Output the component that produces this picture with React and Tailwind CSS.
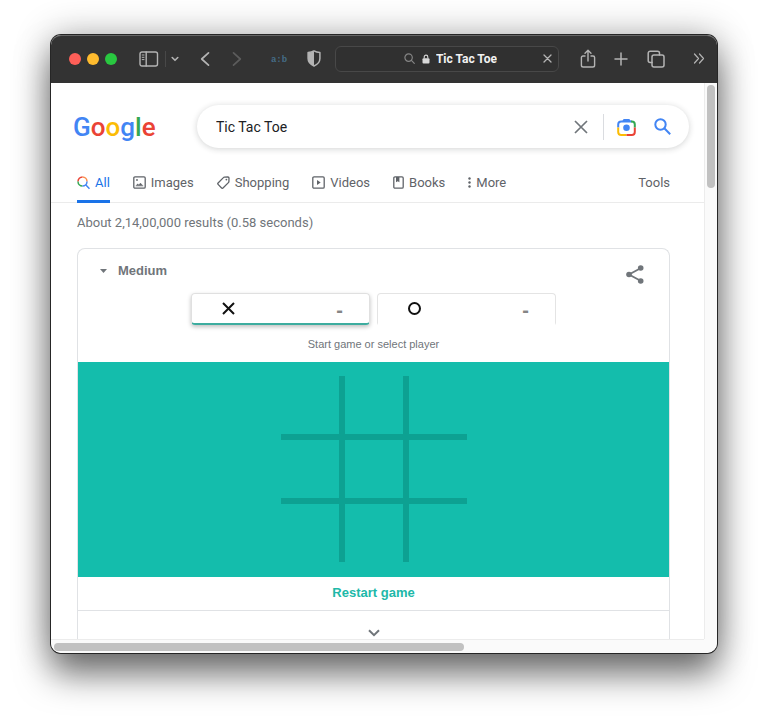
import { useState } from "react";

const stroke = {
  fill: "none",
  stroke: "currentColor",
  strokeLinecap: "round",
  strokeLinejoin: "round",
};

function BarButton({ label, className, children }) {
  return (
    <button type="button" aria-label={label} className={`flex h-6 shrink-0 items-center justify-center ${className}`}>
      {children}
    </button>
  );
}

function TitleBar() {
  return (
    <header className="flex h-12 items-center rounded-t-[10px] border-t border-[#656565] bg-[#333333] pb-[2px] pl-[18px] pr-[9px] text-[#b4b4b4]">
      <div className="flex shrink-0 gap-[6px]">
        <button type="button" aria-label="Close window" className="size-3 rounded-full bg-[#fe5f58]" />
        <button type="button" aria-label="Minimise window" className="size-3 rounded-full bg-[#febb2e]" />
        <button type="button" aria-label="Zoom window" className="size-3 rounded-full bg-[#29c840]" />
      </div>
      <BarButton label="Sidebar" className="ml-[22px] w-5">
        <svg width="20" height="16" viewBox="0 0 20 16" {...stroke} strokeWidth="1.4">
          <rect x="1" y="1" width="17.5" height="14" rx="2" />
          <path d="M7.2 1v14" />
          <path d="M3.2 4h1.8M3.2 6.3h1.8M3.2 8.6h1.8" strokeWidth="1" />
        </svg>
      </BarButton>
      <span className="ml-[6px] h-4 w-px shrink-0 bg-[#484848]" />
      <BarButton label="Tab groups" className="ml-1 w-[10px]">
        <svg width="8" height="6" viewBox="0 0 8 6" {...stroke} strokeWidth="1.6">
          <path d="M1.2 1.5 4 4.3l2.8-2.8" />
        </svg>
      </BarButton>
      <BarButton label="Back" className="ml-[19px] w-3">
        <svg width="10" height="16" viewBox="0 0 10 16" {...stroke} strokeWidth="1.7">
          <path d="M8.5 1.8 1.7 8l6.8 6.2" />
        </svg>
      </BarButton>
      <BarButton label="Forward" className="ml-5 w-3 text-[#5c5c5c]">
        <svg width="10" height="16" viewBox="0 0 10 16" {...stroke} strokeWidth="1.7">
          <path d="M1.5 1.8 8.3 8l-6.8 6.2" />
        </svg>
      </BarButton>
      <BarButton
        label="Extension"
        className="ml-[26px] w-5 pt-1 font-['Liberation_Mono',monospace] text-[9px] font-bold text-[#456c86]"
      >
        a:b
      </BarButton>
      <BarButton label="Privacy report" className="ml-[17px] w-4">
        <svg width="14" height="17" viewBox="0 0 14 17" fill="none">
          <path d="M7 .9c1.9 1.2 3.8 1.6 5.9 1.7v6c0 3.7-2.6 6-5.9 7.4C3.7 14.6 1.1 12.3 1.1 8.6v-6C3.2 2.5 5.1 2.1 7 .9z" stroke="#b4b4b4" strokeWidth="1.5" strokeLinejoin="round" />
          <path d="M7 .9V16C3.7 14.6 1.1 12.3 1.1 8.6v-6C3.2 2.5 5.1 2.1 7 .9z" fill="#b4b4b4" />
        </svg>
      </BarButton>
      <div className="ml-[13px] flex h-[26px] min-w-0 flex-1 items-center rounded-md border border-[#484848] bg-[#303030] pr-[5px]">
        <div className="flex min-w-0 flex-1 items-center justify-center pl-6">
          <svg width="11" height="11" viewBox="0 0 11 11" {...stroke} strokeWidth="1.2" className="shrink-0 text-[#858585]">
            <circle cx="4.6" cy="4.6" r="3.7" />
            <path d="m7.4 7.4 2.9 2.9" />
          </svg>
          <svg width="8" height="10" viewBox="0 0 8 10" className="ml-[7px] shrink-0">
            <rect x=".5" y="4.2" width="7" height="5.3" rx="1" fill="#d8d8d8" />
            <path d="M2.2 4.5V2.9a1.8 1.8 0 0 1 3.6 0v1.6" fill="none" stroke="#d8d8d8" strokeWidth="1.1" />
          </svg>
          <span className="ml-[6px] truncate font-['Roboto',sans-serif] text-[12px] font-bold leading-4 text-[#f2f2f2]">Tic Tac Toe</span>
        </div>
        <BarButton label="Stop" className="w-3">
          <svg width="9" height="9" viewBox="0 0 9 9" {...stroke} strokeWidth="1.3">
            <path d="m1 1 7 7M8 1 1 8" />
          </svg>
        </BarButton>
      </div>
      <BarButton label="Share" className="ml-5 w-[18px]">
        <svg width="16" height="20" viewBox="0 0 16 20" {...stroke} strokeWidth="1.4">
          <path d="M5 7H3a1.6 1.6 0 0 0-1.6 1.6v7.6A1.8 1.8 0 0 0 3.2 18h9.6a1.8 1.8 0 0 0 1.8-1.8V8.6A1.6 1.6 0 0 0 13 7h-2M8 12V1.5M5 4.3l3-3 3 3" />
        </svg>
      </BarButton>
      <BarButton label="New tab" className="ml-4 w-4">
        <svg width="14" height="14" viewBox="0 0 14 14" {...stroke} strokeWidth="1.5">
          <path d="M7 1v12M1 7h12" />
        </svg>
      </BarButton>
      <BarButton label="Tab overview" className="ml-[18px] w-[18px]">
        <svg width="18" height="18" viewBox="0 0 18 18" {...stroke} strokeWidth="1.5">
          <rect x="5" y="5" width="12" height="12" rx="2" />
          <path d="M5 12.5H3.2a2 2 0 0 1-2-2V3.2a2 2 0 0 1 2-2h7.3a2 2 0 0 1 2 2V5" />
        </svg>
      </BarButton>
      <BarButton label="More toolbar items" className="ml-[25px] w-[18px]">
        <svg width="12" height="11" viewBox="0 0 12 11" {...stroke} strokeWidth="1.2">
          <path d="m1.5 1 4 4.500-4 4.500M6.500 1l4 4.500-4 4.500" />
        </svg>
      </BarButton>
    </header>
  );
}

function Logo() {
  return (
    <a href="#home" aria-label="Google" className="w-[124px] shrink-0 font-['Roboto',sans-serif] text-[26px] font-medium leading-9 text-[#4285f4]">
      G<span className="text-[#ea4335]">o</span>
      <span className="text-[#fbbc05]">o</span>g<span className="text-[#34a853]">l</span>
      <span className="text-[#ea4335]">e</span>
    </a>
  );
}

function SearchBox() {
  return (
    <form className="flex h-[43px] min-w-0 flex-1 items-center rounded-full bg-white pl-[19px] pr-[18px] shadow-[0_1px_6px_rgba(32,33,36,0.2)]" onSubmit={(e) => e.preventDefault()}>
      <input
        type="text"
        aria-label="Search"
        defaultValue="Tic Tac Toe"
        className="min-w-0 flex-1 bg-transparent font-['Roboto',sans-serif] text-[14px] leading-5 text-[#202124] outline-none"
      />
      <button type="button" aria-label="Clear" className="text-[#70757a]">
        <svg width="14" height="14" viewBox="0 0 14 14" {...stroke} strokeWidth="1.7" strokeLinecap="butt">
          <path d="m1 1 12 12M13 1 1 13" />
        </svg>
      </button>
      <span className="ml-[15px] h-[26px] w-px bg-[#dadce0]" />
      <button type="button" aria-label="Search by image" className="ml-[13px]">
        <svg width="19" height="18" viewBox="0 0 19 18" fill="none" strokeWidth="2">
          <path d="M1.2 9.5v-3a3 3 0 0 1 3-3h10.600" stroke="#4285f4" />
          <path d="M5 3.500 6.600 1h5.800L14 3.500z" fill="#4285f4" />
          <path d="M14 3.500h.8a3 3 0 0 1 3 3v3" stroke="#34a853" />
          <path d="M1.200 9.500V14a3 3 0 0 0 3 3h5.300" stroke="#fbbc04" />
          <path d="M9.500 17h5.300a3 3 0 0 0 3-3V9.500" stroke="#ea4335" />
          <circle cx="9.5" cy="9.7" r="3.3" fill="#4285f4" />
        </svg>
      </button>
      <button type="submit" aria-label="Google Search" className="ml-[18px] text-[#4285f4]">
        <svg width="17" height="17" viewBox="0 0 17 17" {...stroke} strokeWidth="2" strokeLinecap="butt">
          <circle cx="6.5" cy="6.5" r="5.2" />
          <path d="m10.300 10.300 5.900 5.900" />
        </svg>
      </button>
    </form>
  );
}

const tabIcons = {
  All: (
    <svg width="13" height="14" viewBox="0 0 13 14" fill="none" strokeWidth="1.5">
      <path d="M1 5.500A4.500 4.500 0 0 1 5.500 1" stroke="#ea4335" />
      <path d="M5.500 1A4.500 4.500 0 0 1 10 5.500" stroke="#fb8c4a" />
      <path d="M5.500 10A4.500 4.500 0 0 1 1 5.500" stroke="#34a853" />
      <path d="M10 5.500A4.500 4.500 0 0 1 5.500 10M8.700 8.700l3.800 4" stroke="#4285f4" />
    </svg>
  ),
  Images: (
    <svg width="13" height="13" viewBox="0 0 13 13" {...stroke} strokeWidth="1.3">
      <rect x=".8" y=".8" width="11.4" height="11.4" rx="1.2" />
      <path d="m3 9.800 1.700-2 1.200 1.300 1.500-2 2.600 2.700z" fill="currentColor" strokeWidth=".4" />
      <circle cx="4" cy="4" r=".9" fill="currentColor" stroke="none" />
    </svg>
  ),
  Shopping: (
    <svg width="13" height="13" viewBox="0 0 13 13" {...stroke} strokeWidth="1.3">
      <path d="m1.100 7 5.300-5.400a1.500 1.500 0 0 1 1-.5l3.500-.1a1.100 1.100 0 0 1 1.100 1.100l-.1 3.500a1.500 1.500 0 0 1-.5 1L6 12a1 1 0 0 1-1.400 0L1.100 8.400A1 1 0 0 1 1.100 7z" />
      <circle cx="9.4" cy="3.6" r=".9" fill="currentColor" stroke="none" />
    </svg>
  ),
  Videos: (
    <svg width="13" height="13" viewBox="0 0 13 13" {...stroke} strokeWidth="1.3">
      <rect x=".8" y=".8" width="11.4" height="11.4" rx="1.2" />
      <path d="M5 4v5l3.700-2.500z" fill="currentColor" stroke="none" />
    </svg>
  ),
  Books: (
    <svg width="11" height="13" viewBox="0 0 11 13" {...stroke} strokeWidth="1.3">
      <rect x=".8" y=".8" width="9.4" height="11.4" rx="1.2" />
      <path d="M3 1v5.300l1.700-1.100 1.700 1.100V1z" fill="currentColor" stroke="none" />
    </svg>
  ),
  More: (
    <svg width="3" height="11" viewBox="0 0 3 11" fill="currentColor">
      <circle cx="1.5" cy="1.5" r="1.2" />
      <circle cx="1.5" cy="5.5" r="1.2" />
      <circle cx="1.5" cy="9.5" r="1.2" />
    </svg>
  ),
};

function Tab({ name, className = "pt-[2px]" }) {
  return (
    <a href={`#${name.toLowerCase()}`} className={`flex shrink-0 items-center gap-[5px] ${className}`}>
      {tabIcons[name]}
      {name}
    </a>
  );
}

function Tabs() {
  return (
    <nav className="flex h-[42px] items-stretch gap-[23px] border-b border-[#ebebeb] pl-[26px] pr-[34px] text-[13px] leading-5 text-[#5f6368]">
      <Tab name="All" className="-mb-px border-b-3 border-[#1a73e8] pt-1 text-[#1a73e8]" />
      <Tab name="Images" />
      <Tab name="Shopping" />
      <Tab name="Videos" />
      <Tab name="Books" />
      <Tab name="More" />
      <a href="#tools" className="ml-auto flex items-center pt-[2px]">
        Tools
      </a>
    </nav>
  );
}

function Player({ mark, name, active, onSelect }) {
  return (
    <button
      type="button"
      aria-label={name}
      aria-pressed={active}
      onClick={onSelect}
      className={`flex h-8 w-[179px] items-center justify-between border border-b-2 pl-[30px] pr-[26px] ${
        active
          ? "rounded border-[#e0e0e0] border-b-[#3dac9f] shadow-[0_2px_4px_rgba(0,0,0,0.25)]"
          : "rounded-t border-[#e4e4e4] border-b-transparent"
      }`}
    >
      {mark}
      <span className="pt-[2px] text-[20px] font-bold leading-6 text-[#858585]">-</span>
    </button>
  );
}

function Board() {
  const cells = Array.from({ length: 9 }, (_, i) => i);
  return (
    <div className="flex justify-center bg-[#14bdac] pb-[15px] pt-[14px]">
      <div className="grid grid-cols-[64px_64px_58px] grid-rows-[64px_64px_58px]">
        {cells.map((i) => (
          <button
            key={i}
            type="button"
            aria-label={`Row ${Math.floor(i / 3) + 1}, column ${(i % 3) + 1}`}
            className={`border-[#0da192] ${i % 3 < 2 ? "border-r-6" : ""} ${i < 6 ? "border-b-6" : ""}`}
          />
        ))}
      </div>
    </div>
  );
}

function GameCard() {
  const [player, setPlayer] = useState("X");
  return (
    <section aria-label="Tic Tac Toe" className="ml-[26px] mr-[34px] rounded-t-lg border border-b-0 border-[#e0e2e5] font-['Liberation_Sans',sans-serif] text-[#70757a]">
      <div className="flex h-[44px] items-start justify-between pl-[22px] pr-[25px] pt-3">
        <div className="flex items-center">
          <svg width="7" height="4" viewBox="0 0 7 4" fill="currentColor">
            <path d="M0 0h7L3.500 4z" />
          </svg>
          <select aria-label="Difficulty" defaultValue="Medium" className="ml-[11px] appearance-none bg-transparent text-[13px] font-bold leading-5">
            <option>Easy</option>
            <option>Medium</option>
            <option>Impossible</option>
          </select>
        </div>
        <button type="button" aria-label="Share" className="pt-1">
          <svg width="18" height="19" viewBox="0 0 18 19" fill="currentColor">
            <path d="M15 3 3 9.500 15 16" fill="none" stroke="currentColor" strokeWidth="1.8" />
            <circle cx="14.7" cy="3" r="2.8" />
            <circle cx="3" cy="9.5" r="2.8" />
            <circle cx="14.7" cy="16" r="2.8" />
          </svg>
        </button>
      </div>
      <div className="flex justify-center gap-[7px]">
        <Player
          name="Play as X"
          active={player === "X"}
          onSelect={() => setPlayer("X")}
          mark={
            <svg width="13" height="13" viewBox="0 0 13 13" fill="none" stroke="#111" strokeWidth="2">
              <path d="m1 1 11 11M12 1 1 12" />
            </svg>
          }
        />
        <Player
          name="Play as O"
          active={player === "O"}
          onSelect={() => setPlayer("O")}
          mark={
            <svg width="13" height="13" viewBox="0 0 13 13" fill="none" stroke="#111" strokeWidth="2">
              <circle cx="6.5" cy="6.5" r="5.5" />
            </svg>
          }
        />
      </div>
      <p className="pb-[10px] pt-[11px] text-center text-[11px] leading-4">Start game or select player</p>
      <Board />
      <button type="button" className="block h-[34px] w-full border-b border-[#e0e2e5] pb-[2px] text-center text-[13px] font-bold leading-5 text-[#20b8a8]">
        Restart game
      </button>
      <button type="button" aria-label="Show more" className="flex h-7 w-full justify-center pt-[18px]">
        <svg width="12" height="8" viewBox="0 0 12 8" {...stroke} strokeWidth="2" strokeLinecap="butt" strokeLinejoin="miter">
          <path d="m1 1.200 5 5 5-5" />
        </svg>
      </button>
    </section>
  );
}

export default function App() {
  return (
    <div className="min-h-screen bg-white px-[51px] pb-[66px] pt-[35px]">
      <div className="rounded-[10px] shadow-[0_0_0_1px_#262626,0_22px_34px_rgba(0,0,0,0.5),0_0_36px_rgba(0,0,0,0.3)]">
        <TitleBar />
        <div className="grid grid-cols-[minmax(0,1fr)_13px] overflow-hidden rounded-b-[10px] bg-[#fafafa]">
          <main className="bg-white font-['Roboto',sans-serif]">
            <div className="flex items-center pl-[22px] pr-[15px] pt-[22px]">
              <Logo />
              <SearchBox />
            </div>
            <div className="h-[13px]" />
            <Tabs />
            <p className="px-[26px] pb-[15px] pt-[10px] text-[13px] leading-5 text-[#70757a]">
              About 2,14,00,000 results (0.58 seconds)
            </p>
            <GameCard />
          </main>
          <div className="border-l border-[#ececec] px-[2px] pt-[2px]">
            <div className="h-[103px] w-2 rounded-full bg-[#c1c1c1]" />
          </div>
          <div className="h-[14px] border-t border-[#ececec] pl-[3px] pt-[3px]">
            <div className="h-2 w-[63%] rounded-full bg-[#c1c1c1]" />
          </div>
          <div />
        </div>
      </div>
    </div>
  );
}
